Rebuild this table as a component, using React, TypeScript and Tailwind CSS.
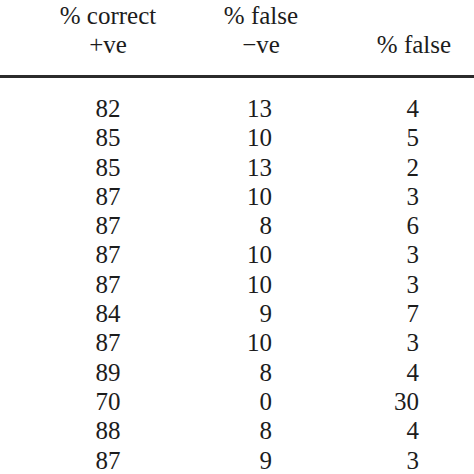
const ROWS: [string, string, string][] = [
  ["82", "13", "4"],
  ["85", "10", "5"],
  ["85", "13", "2"],
  ["87", "10", "3"],
  ["87", "8", "6"],
  ["87", "10", "3"],
  ["87", "10", "3"],
  ["84", "9", "7"],
  ["87", "10", "3"],
  ["89", "8", "4"],
  ["70", "0", "30"],
  ["88", "8", "4"],
  ["87", "9", "3"],
];

export default function App() {
  return (
    <div className="w-[474px] h-[474px] overflow-hidden bg-white text-[#1c1c1c] font-['Liberation_Serif',serif] text-[25px] leading-[29px] pt-[1px]">
      {/* Header */}
      <div className="flex pl-[58px]">
        <div className="w-[100px] text-center">
          <div>% correct</div>
          <div>+ve</div>
        </div>
        <div className="w-[206px] text-center">
          <div>% false</div>
          <div>−ve</div>
        </div>
        <div className="w-[100px] flex flex-col justify-end text-center">
          <div>% false</div>
        </div>
      </div>

      <div className="mt-[16px] h-[3px] bg-[#2b2b2b]" />

      {/* Body */}
      <div className="mt-[16px] leading-[29.3px]">
        {ROWS.map((r, i) => (
          <div key={i} className="flex pl-[58px]">
            <div className="w-[100px] text-center">{r[0]}</div>
            <div className="w-[114px] text-right">{r[1]}</div>
            <div className="w-[147px] text-right">{r[2]}</div>
          </div>
        ))}
      </div>
    </div>
  );
}
